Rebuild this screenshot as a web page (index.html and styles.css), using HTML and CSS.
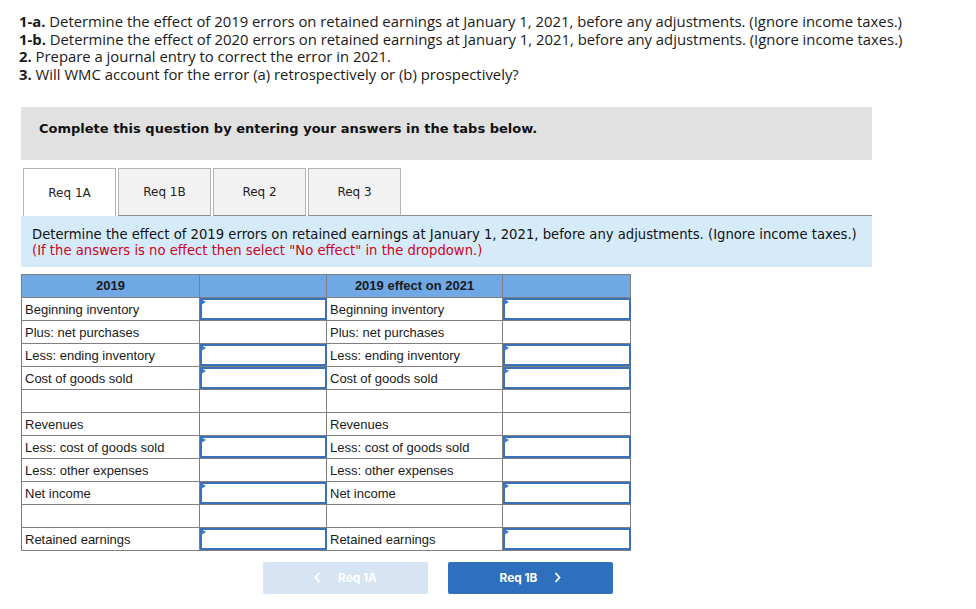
FILE: index.html
```html
<!DOCTYPE html>
<html>
<head>
<meta charset="utf-8">
<link rel="stylesheet" href="styles.css">
</head>
<body>
<div class="question">
  <p><b>1-a.</b> Determine the effect of 2019 errors on retained earnings at January 1, 2021, before any adjustments. (Ignore income taxes.)</p>
  <p><b>1-b.</b> Determine the effect of 2020 errors on retained earnings at January 1, 2021, before any adjustments. (Ignore income taxes.)</p>
  <p><b>2.</b> Prepare a journal entry to correct the error in 2021.</p>
  <p><b>3.</b> Will WMC account for the error (a) retrospectively or (b) prospectively?</p>
</div>
<div class="panel">
  <div class="instr">Complete this question by entering your answers in the tabs below.</div>
  <div class="tabs">
    <div class="tab active">Req 1A</div>
    <div class="tab">Req 1B</div>
    <div class="tab">Req 2</div>
    <div class="tab">Req 3</div>
    <div class="tabfill"></div>
  </div>
  <div class="desc">
    <div>Determine the effect of 2019 errors on retained earnings at January 1, 2021, before any adjustments. (Ignore income taxes.)</div>
    <div class="red">(If the answers is no effect then select "No effect" in the dropdown.)</div>
  </div>
  <table class="grid">
    <colgroup><col class="c1"><col class="c2"><col class="c3"><col class="c4"></colgroup>
    <thead>
      <tr><th>2019</th><th></th><th>2019 effect on 2021</th><th></th></tr>
    </thead>
    <tbody>
      <tr><td>Beginning inventory</td><td class="in"><div class="box"></div></td><td>Beginning inventory</td><td class="in"><div class="box"></div></td></tr>
      <tr><td>Plus: net purchases</td><td></td><td>Plus: net purchases</td><td></td></tr>
      <tr><td>Less: ending inventory</td><td class="in"><div class="box"></div></td><td>Less: ending inventory</td><td class="in"><div class="box"></div></td></tr>
      <tr><td>Cost of goods sold</td><td class="in"><div class="box"></div></td><td>Cost of goods sold</td><td class="in"><div class="box"></div></td></tr>
      <tr><td></td><td></td><td></td><td></td></tr>
      <tr><td>Revenues</td><td></td><td>Revenues</td><td></td></tr>
      <tr><td>Less: cost of goods sold</td><td class="in"><div class="box"></div></td><td>Less: cost of goods sold</td><td class="in"><div class="box"></div></td></tr>
      <tr><td>Less: other expenses</td><td></td><td>Less: other expenses</td><td></td></tr>
      <tr><td>Net income</td><td class="in"><div class="box"></div></td><td>Net income</td><td class="in"><div class="box"></div></td></tr>
      <tr><td></td><td></td><td></td><td></td></tr>
      <tr><td>Retained earnings</td><td class="in"><div class="box"></div></td><td>Retained earnings</td><td class="in"><div class="box"></div></td></tr>
    </tbody>
  </table>
  <div class="nav">
    <div class="btn prev"><svg class="chev left" width="7" height="11" viewBox="0 0 7 11"><path d="M5.5 1 L1.5 5.5 L5.5 10" fill="none" stroke="#fff" stroke-width="1.8"/></svg>Req 1A</div>
    <div class="btn next">Req 1B<svg class="chev right" width="7" height="11" viewBox="0 0 7 11"><path d="M1.5 1 L5.5 5.5 L1.5 10" fill="none" stroke="#fff" stroke-width="1.8"/></svg></div>
  </div>
</div>
</body>
</html>
```

FILE: styles.css
```css
* { box-sizing: border-box; }
body {
  margin: 0;
  background: #fff;
  font-family: "Open Sans", "Liberation Sans", sans-serif;
  color: #1a1a1a;
}
.question {
  padding: 13px 0 0 19px;
  font-size: 14.85px;
  line-height: 17.7px;
}
.question p { margin: 0; }
.question b { font-weight: 700; }
.panel {
  margin: 23px 0 0 21px;
  width: 851px;
}
.instr {
  background: #e1e1e1;
  height: 53px;
  padding: 14px 0 0 18px;
  font-family: "DejaVu Sans", Verdana, sans-serif;
  font-weight: bold;
  font-size: 13px;
  color: #111;
}
.tabs {
  display: flex;
  margin-top: 8px;
  height: 48px;
}
.tab {
  width: 93px;
  margin-right: 2px;
  border: 1px solid #b5b5b5;
  border-bottom: 1px solid #8c8c8c;
  background: #f2f2f2;
  font-family: "DejaVu Sans", Verdana, sans-serif;
  font-size: 12px;
  color: #222;
  display: flex;
  align-items: center;
  justify-content: center;
  padding-top: 1px;
}
.tab.active {
  margin-left: 2px;
  background: #fff;
  border-bottom: none;
}
.tabfill {
  flex: 1;
  border-bottom: 1px solid #8c8c8c;
  margin-left: -2px;
}
.desc {
  background: #d6ebf9;
  height: 51px;
  padding: 11px 0 0 11px;
  font-family: "DejaVu Sans", Verdana, sans-serif;
  font-size: 13.2px;
  line-height: 16px;
  color: #111;
}
.desc .red { color: #d0021b; }
.grid {
  margin-top: 7px;
  border-collapse: collapse;
  width: 609px;
  table-layout: fixed;
  font-family: "Liberation Sans", Arial, sans-serif;
  font-size: 13px;
  color: #1a1a1a;
}
.c1 { width: 178px; }
.c2 { width: 127px; }
.c3 { width: 176px; }
.c4 { width: 128px; }
.grid th, .grid td {
  border: 1px solid #7f7f7f;
  height: 23px;
  padding: 0 3px;
}
.grid th {
  background: #6fa8e5;
  font-weight: bold;
  text-align: center;
  color: #1a1a1a;
}
.grid td { padding-top: 1px; }
.grid td.in { padding: 0; }
.box {
  position: relative;
  height: 22px;
  border: 2px solid #3b71b8;
  margin: 0 -1px 0 0;
}
.box::before {
  content: "";
  position: absolute;
  left: -1px;
  top: -1px;
  border-left: 5px solid #3b78d0;
  border-top: 3px solid transparent;
  border-bottom: 3px solid transparent;
}
.nav {
  display: flex;
  margin: 11px 0 0 242px;
  gap: 20px;
}
.btn {
  width: 165px;
  height: 32px;
  border-radius: 2px;
  display: flex;
  align-items: center;
  justify-content: center;
  font-family: "Inter", "Liberation Sans", sans-serif;
  font-weight: 700;
  font-size: 11.8px;
  color: #fff;
}
.btn.prev { background: #d6e4f3; }
.btn.next { background: #2e70be; }
.chev.left { margin-right: 17px; }
.chev.right { margin-left: 17px; }
```
